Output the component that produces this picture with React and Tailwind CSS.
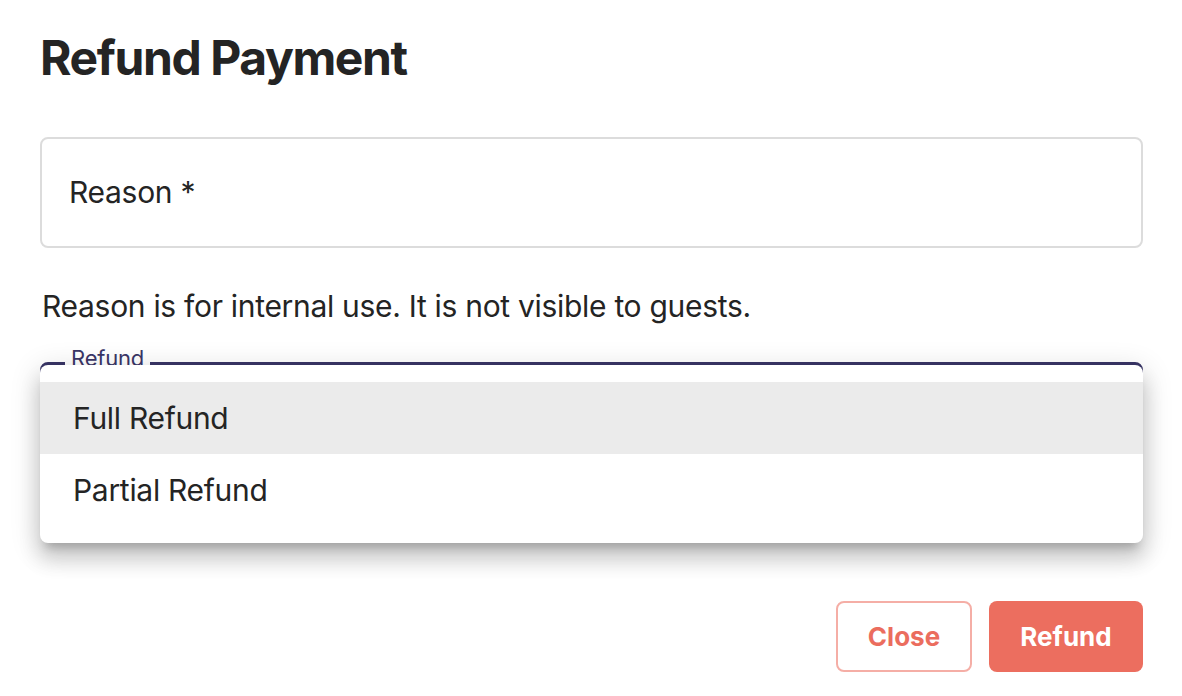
import React from 'react';

const options = ['Full Refund', 'Partial Refund'];

export default function App() {
  return (
    <div
      className="min-h-[696px] w-[1182px] bg-white pl-10 pr-[39px] pt-[26px] text-[#242424]"
      style={{ fontFamily: 'Inter, "Liberation Sans", sans-serif' }}
    >
      {/* Title */}
      <h1 className="text-[48px] font-bold leading-[64px] tracking-[-1.4px]">Refund Payment</h1>

      {/* Reason field */}
      <div className="mt-[47px] flex h-[111px] items-center rounded-lg border-2 border-[#dcdcdc] px-[27px]">
        <span className="text-[30px] tracking-[-0.3px]">Reason *</span>
      </div>
      <p className="mt-[40px] px-[2px] text-[30px] leading-[36px] tracking-[-0.3px]">
        Reason is for internal use. It is not visible to guests.
      </p>

      {/* Refund select (open) */}
      <div className="relative mt-[35px] h-[111px]">
        <fieldset className="absolute inset-0 rounded-lg border-[5px] border-[#3a3667] px-[20px]">
          <legend className="-translate-y-[6px] px-[6px] text-[22px] leading-[10px] tracking-[-0.2px] text-[#3a3667]">
            Refund
          </legend>
        </fieldset>

        {/* Dropdown menu */}
        <div className="absolute left-0 right-0 top-[6px] z-10 rounded-lg bg-white py-[17px] shadow-[0_10px_10px_-6px_rgba(0,0,0,0.2),0_16px_20px_2px_rgba(0,0,0,0.14),0_6px_28px_4px_rgba(0,0,0,0.12)]">
          {options.map((opt, i) => (
            <div
              key={opt}
              className={`flex h-[72px] items-center px-[33px] text-[30px] tracking-[-0.3px] ${i === 0 ? 'bg-[#ebebeb]' : ''}`}
            >
              {opt}
            </div>
          ))}
        </div>
      </div>

      {/* Actions */}
      <div className="mt-[131px] flex justify-end gap-[17px]">
        <button className="h-[71px] w-[136px] rounded-lg border-2 border-[#f5aea6] bg-white text-[26px] font-bold text-[#eb6d5e]">
          Close
        </button>
        <button className="h-[71px] w-[154px] rounded-lg bg-[#ec6e5f] text-[26px] font-bold text-white">
          Refund
        </button>
      </div>
    </div>
  );
}
